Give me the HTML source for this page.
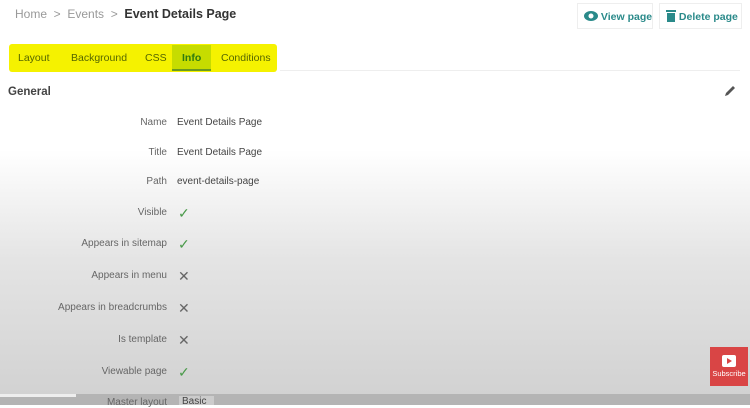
<!DOCTYPE html>
<html><head><style>
body{margin:0;width:750px;height:405px;overflow:hidden;font-family:"Liberation Sans",sans-serif;background:linear-gradient(#fff 0px,#fff 150px,#e4e4e4 260px,#d2d2d2 395px);position:relative}
.a{position:absolute;white-space:nowrap}
.bc{top:7px;left:15px;font-size:12px;color:#999}
.bc b{color:#333;font-weight:bold;font-size:12.5px}
.btn{top:3px;height:26px;border:1px solid #eee;background:#fff;color:#2a8a8a;font-size:10.5px;font-weight:bold;line-height:26px;padding:0 6px;box-sizing:border-box}
.hl{left:9px;top:44px;width:268px;height:28px;background:#f5f200;border-radius:3px}
.tab{top:52px;font-size:10.5px;color:#556600}
.lab{right:583px;font-size:10px;color:#666;text-align:right}
.val{left:177px;font-size:10px;color:#444}
.ck{left:178px;color:#4a9a4a;font-size:14px}
.x{left:178px;color:#666;font-size:14px}
</style></head><body>
<div class="a bc">Home &nbsp;&gt;&nbsp; Events &nbsp;&gt;&nbsp; <b>Event Details Page</b></div>
<div class="a btn" style="left:577px;width:76px"><svg width="14" height="10" viewBox="0 0 14 10" style="vertical-align:-1px"><ellipse cx="7" cy="5" rx="7" ry="5" fill="#2a8a8a"/><circle cx="7" cy="5" r="2.5" fill="#fff"/></svg> View page</div>
<div class="a btn" style="left:659px;width:83px"><svg width="10" height="13" viewBox="0 0 10 13" style="vertical-align:-2px"><rect x="0" y="1" width="10" height="2" fill="#2a8a8a"/><rect x="1" y="4" width="8" height="9" fill="#2a8a8a"/></svg> Delete page</div>
<div class="a hl"></div>
<div class="a" style="left:172px;top:45px;width:39px;height:26px;background:#c6dc00"></div>
<div class="a" style="left:172px;top:69px;width:39px;height:2px;background:#6a9a20"></div>
<div class="a" style="left:280px;top:70px;width:460px;height:1px;background:#eee"></div>
<div class="a tab" style="left:18px">Layout</div>
<div class="a tab" style="left:71px">Background</div>
<div class="a tab" style="left:145px">CSS</div>
<div class="a tab" style="left:182px;color:#2d7a10;font-weight:bold">Info</div>
<div class="a tab" style="left:221px">Conditions</div>
<div class="a" style="left:8px;top:86px;font-size:11.5px;font-weight:bold;color:#444">General</div>
<svg class="a" style="left:724px;top:85px" width="12" height="12" viewBox="0 0 12 12"><path d="M1 11 L2 8 L9 1 L11 3 L4 10 Z" fill="#555"/></svg>
<div class="a lab" style="top:117px">Name</div><div class="a val" style="top:117px">Event Details Page</div>
<div class="a lab" style="top:147px">Title</div><div class="a val" style="top:147px">Event Details Page</div>
<div class="a lab" style="top:176px">Path</div><div class="a val" style="top:176px">event-details-page</div>
<div class="a lab" style="top:207px">Visible</div><div class="a ck" style="top:205px">✓</div>
<div class="a lab" style="top:238px">Appears in sitemap</div><div class="a ck" style="top:236px">✓</div>
<div class="a lab" style="top:270px">Appears in menu</div><div class="a x" style="top:268px">✕</div>
<div class="a lab" style="top:302px">Appears in breadcrumbs</div><div class="a x" style="top:300px">✕</div>
<div class="a lab" style="top:334px">Is template</div><div class="a x" style="top:332px">✕</div>
<div class="a lab" style="top:366px">Viewable page</div><div class="a ck" style="top:364px">✓</div>
<div class="a" style="left:0;top:394px;width:750px;height:11px;background:#b4b4b4"></div>
<div class="a" style="left:0;top:394px;width:76px;height:3px;background:#eee"></div>
<div class="a lab" style="top:397px">Master layout</div>
<div class="a" style="left:179px;top:396px;width:32px;height:9px;background:#ccc;font-size:10px;color:#444;padding-left:3px">Basic</div>
<div class="a" style="left:710px;top:347px;width:38px;height:39px;background:#d94545;color:#fff;font-size:7.5px;text-align:center">
<div style="margin:8px auto 2px;width:14px;height:12px;background:#fff;border-radius:2px;position:relative"><div style="position:absolute;left:5px;top:3px;border-left:5px solid #d94545;border-top:3px solid transparent;border-bottom:3px solid transparent"></div></div>Subscribe</div>
</body></html>
